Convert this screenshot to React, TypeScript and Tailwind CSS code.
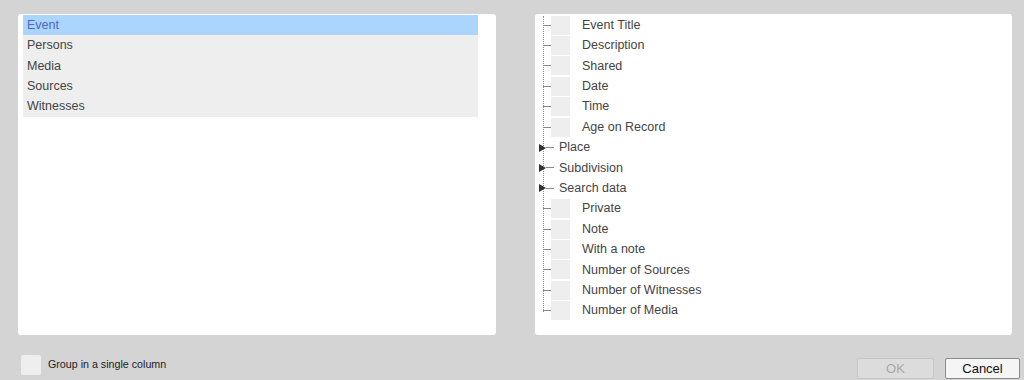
import React from "react";

const leftItems = ["Event", "Persons", "Media", "Sources", "Witnesses"];

type TreeItem = { label: string; group?: boolean };
const treeItems: TreeItem[] = [
  { label: "Event Title" },
  { label: "Description" },
  { label: "Shared" },
  { label: "Date" },
  { label: "Time" },
  { label: "Age on Record" },
  { label: "Place", group: true },
  { label: "Subdivision", group: true },
  { label: "Search data", group: true },
  { label: "Private" },
  { label: "Note" },
  { label: "With a note" },
  { label: "Number of Sources" },
  { label: "Number of Witnesses" },
  { label: "Number of Media" },
];

const font = { fontFamily: '"Liberation Sans", Arial, sans-serif' };

export default function App() {
  return (
    <div
      className="w-[1024px] h-[380px] bg-[#d4d4d4] flex flex-col overflow-hidden"
      style={font}
    >
      <div className="flex pt-[14px] pl-[18px] gap-[39px]">
        <div className="w-[478px] h-[321px] bg-white rounded-[3px] pl-[5px] pt-[1px]">
          <div className="w-[455px] bg-[#eeeeee] flex flex-col">
            {leftItems.map((it, i) => (
              <div
                key={it}
                className={
                  "h-[20.4px] flex items-center pl-[4px] text-[12.5px] " +
                  (i === 0 ? "bg-[#acd5fd] text-[#4a68c4]" : "text-[#444444]")
                }
              >
                {it}
              </div>
            ))}
          </div>
        </div>
        <div className="w-[477px] h-[321px] bg-white rounded-[3px] pt-[1px] relative">
          <div className="absolute left-[8px] top-[2px] h-[296px] border-l border-dotted border-[#8a8a8a]" />
          <div className="flex flex-col">
            {treeItems.map((t) => (
              <div key={t.label} className="h-[20.4px] flex items-center relative">
                {t.group ? (
                  <>
                    <div className="w-[4px]" />
                    <svg width="7" height="8" viewBox="0 0 7 8" className="shrink-0">
                      <path d="M0 0 L7 4 L0 8 Z" fill="#333" />
                    </svg>
                    <div className="w-[8px] border-t border-[#8a8a8a] shrink-0" />
                    <span className="pl-[5px] text-[12.5px] text-[#444444]">{t.label}</span>
                  </>
                ) : (
                  <>
                    <div className="w-[8px]" />
                    <div className="w-[8px] border-t border-[#8a8a8a] shrink-0" />
                    <div className="w-[19px] h-[19px] bg-[#eeeeee] shrink-0" />
                    <span className="pl-[12px] text-[12.5px] text-[#444444]">{t.label}</span>
                  </>
                )}
              </div>
            ))}
          </div>
        </div>
      </div>
      <div className="flex items-center mt-[15px] pl-[21px] pr-[4px]">
        <div className="w-[20px] h-[20px] bg-[#eeeeee] rounded-[2px]" />
        <span className="ml-[7px] text-[10.7px] text-[#222]">Group in a single column</span>
        <div className="flex-1" />
        <button
          disabled
          className="w-[77px] h-[21px] mt-[8px] border border-[#c6c6c6] bg-[#dcdcdc] text-[#a8a8a8] text-[13px] rounded-[2px]"
        >
          OK
        </button>
        <button className="ml-[11px] w-[75px] h-[21px] mt-[8px] border border-[#8a8a8a] bg-[#f5f5f5] text-[#111] text-[13px] rounded-[2px]">
          Cancel
        </button>
      </div>
    </div>
  );
}
